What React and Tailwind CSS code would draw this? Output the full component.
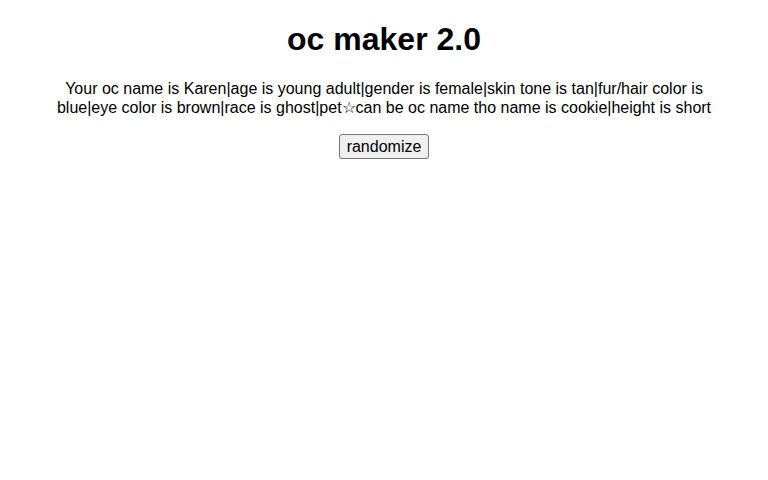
import React, { useState } from 'react';

const traits = {
  names: ['Karen', 'Milo', 'Juniper', 'Rex', 'Luna'],
  ages: ['young adult', 'child', 'teen', 'adult', 'elder'],
  genders: ['female', 'male', 'nonbinary'],
  skins: ['tan', 'pale', 'dark', 'olive'],
  hair: ['blue', 'black', 'pink', 'white', 'red'],
  eyes: ['brown', 'green', 'blue', 'gold'],
  races: ['ghost', 'human', 'elf', 'wolf', 'cat'],
  pets: ['cookie', 'biscuit', 'pebble', 'mochi'],
  heights: ['short', 'tall', 'average'],
};

const pick = (list) => list[Math.floor(Math.random() * list.length)];

const first = {
  name: 'Karen',
  age: 'young adult',
  gender: 'female',
  skin: 'tan',
  hair: 'blue',
  eye: 'brown',
  race: 'ghost',
  pet: 'cookie',
  height: 'short',
};

export default function App() {
  const [oc, setOc] = useState(first);

  const randomize = () =>
    setOc({
      name: pick(traits.names),
      age: pick(traits.ages),
      gender: pick(traits.genders),
      skin: pick(traits.skins),
      hair: pick(traits.hair),
      eye: pick(traits.eyes),
      race: pick(traits.races),
      pet: pick(traits.pets),
      height: pick(traits.heights),
    });

  return (
    <div className="min-h-screen bg-white px-2 text-center text-black font-['Liberation_Sans',Arial,sans-serif]">
      <h1 className="pt-[21px] text-[32px] font-bold leading-[37px]">oc maker 2.0</h1>
      <p className="mx-auto mt-[21px] max-w-[672px] text-base leading-[19px]">
        Your oc name is {oc.name}|age is {oc.age}|gender is {oc.gender}|skin tone is {oc.skin}|fur/hair color is {oc.hair}|eye color is {oc.eye}|race is {oc.race}|pet☆can be oc name tho name is {oc.pet}|height is {oc.height}
      </p>
      <div className="mt-[17px]">
        <button
          onClick={randomize}
          className="rounded-[3px] border border-[#767676] bg-[#efefef] px-[7px] py-[2px] text-base leading-[19px] hover:bg-[#e5e5e5]"
        >
          randomize
        </button>
      </div>
    </div>
  );
}
